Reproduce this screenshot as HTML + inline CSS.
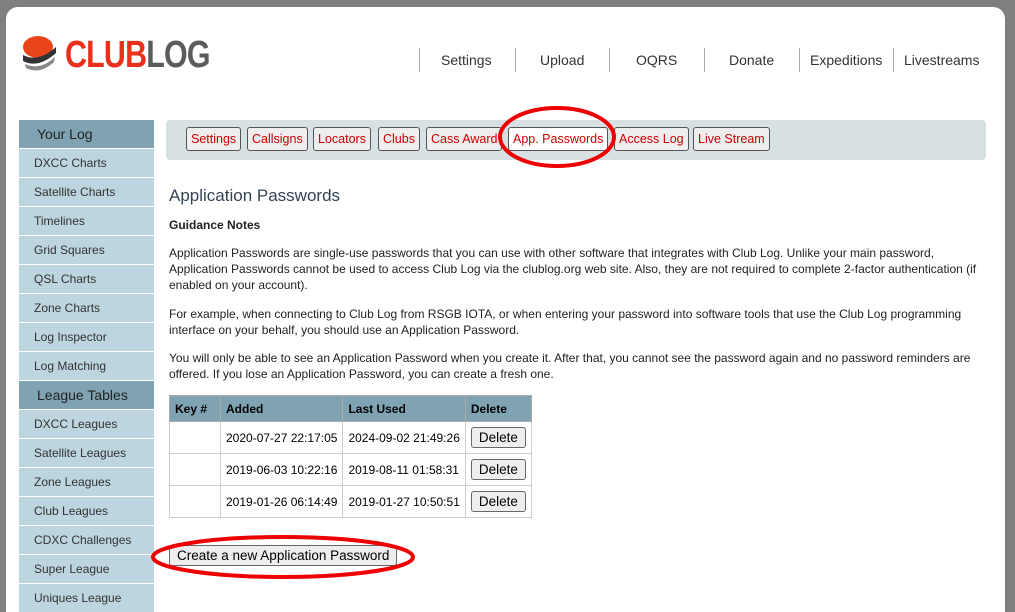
<!DOCTYPE html><html><head><style>
html,body{margin:0;width:1015px;height:612px;overflow:hidden}
body{background:#7f7f7f;font-family:"Liberation Sans",Arial,sans-serif;position:relative}
.page{position:absolute;left:6px;top:7px;width:999px;height:605px;background:#fff;border-radius:12px 12px 0 0}
.a{position:absolute}
.nav span{position:absolute;top:52px;font-size:14px;color:#333}
.sep{position:absolute;top:48px;width:1px;height:24px;background:#aaa}
.side div{position:absolute;left:19px;width:135px;height:28px;background:#bcd5df;font-size:12px;color:#333;line-height:28px;text-indent:15px}
.side div.h{background:#7fa3b2;font-size:14px;text-indent:18px;color:#222}
.tab{position:absolute;top:127px;height:22px;border:1px solid #555;border-radius:3px;background:#eee;color:#c00;font-size:12.5px;line-height:22px;padding:0 4px}
.t{position:absolute;left:169px;font-size:12px;color:#222;line-height:16px;width:810px}
table{position:absolute;left:169px;top:395px;border-collapse:collapse;font-size:12px}
td,th{border:1px solid #ccc;padding:0 5px;height:31px;text-align:left;white-space:nowrap}
th{background:#7fa3b2;height:25px;border-color:#aaa}
button{font:13.5px "Liberation Sans",Arial,sans-serif;background:#eee;border:1px solid #666;border-radius:3px;padding:2px 7px}
</style></head><body>
<div class="page"></div>
<svg class="a" style="left:20px;top:33px" width="40" height="40"><ellipse cx="18" cy="14" rx="15" ry="11" fill="#e8461a"/><path d="M3 22 Q18 30 36 14 L36 20 Q18 36 3 28Z" fill="#333"/><path d="M5 31 Q20 38 35 24 L34 29 Q20 42 6 35Z" fill="#888"/></svg>
<div class="a" style="left:65px;top:34px;font-size:38px;font-weight:bold;letter-spacing:-1px;transform:scaleX(0.8);transform-origin:left"><span style="color:#e8301a">CLUB</span><span style="color:#5b5b5b">LOG</span></div>
<div class="nav"><div class="sep" style="left:419px"></div><span style="left:441px">Settings</span><div class="sep" style="left:515px"></div><span style="left:540px">Upload</span><div class="sep" style="left:609px"></div><span style="left:636px">OQRS</span><div class="sep" style="left:704px"></div><span style="left:729px">Donate</span><div class="sep" style="left:799px"></div><span style="left:810px">Expeditions</span><div class="sep" style="left:893px"></div><span style="left:904px">Livestreams</span></div>
<div class="side">
<div class="h" style="top:120px">Your Log</div>
<div style="top:149px">DXCC Charts</div><div style="top:178px">Satellite Charts</div><div style="top:207px">Timelines</div><div style="top:236px">Grid Squares</div><div style="top:265px">QSL Charts</div><div style="top:294px">Zone Charts</div><div style="top:323px">Log Inspector</div><div style="top:352px">Log Matching</div>
<div class="h" style="top:381px">League Tables</div>
<div style="top:410px">DXCC Leagues</div><div style="top:439px">Satellite Leagues</div><div style="top:468px">Zone Leagues</div><div style="top:497px">Club Leagues</div><div style="top:526px">CDXC Challenges</div><div style="top:555px">Super League</div><div style="top:584px;height:28px">Uniques League</div>
</div>
<div class="a" style="left:166px;top:120px;width:820px;height:40px;background:#d7e0e3;border-radius:4px"></div>
<div class="tab" style="left:186px">Settings</div><div class="tab" style="left:247px">Callsigns</div><div class="tab" style="left:313px">Locators</div><div class="tab" style="left:378px">Clubs</div><div class="tab" style="left:426px">Cass Award</div><div class="tab" style="left:508px;background:#fff">App. Passwords</div><div class="tab" style="left:614px">Access Log</div><div class="tab" style="left:693px">Live Stream</div>
<div class="t" style="top:188px;font-size:17px;color:#345">Application Passwords</div>
<div class="t" style="top:217px;font-weight:bold">Guidance Notes</div>
<div class="t" style="top:245px">Application Passwords are single-use passwords that you can use with other software that integrates with Club Log. Unlike your main password, Application Passwords cannot be used to access Club Log via the clublog.org web site. Also, they are not required to complete 2-factor authentication (if enabled on your account).</div>
<div class="t" style="top:306px">For example, when connecting to Club Log from RSGB IOTA, or when entering your password into software tools that use the Club Log programming interface on your behalf, you should use an Application Password.</div>
<div class="t" style="top:350px">You will only be able to see an Application Password when you create it. After that, you cannot see the password again and no password reminders are offered. If you lose an Application Password, you can create a fresh one.</div>
<table><tr><th style="width:40px">Key #</th><th style="width:111px">Added</th><th style="width:111px">Last Used</th><th style="width:55px">Delete</th></tr>
<tr><td></td><td>2020-07-27 22:17:05</td><td>2024-09-02 21:49:26</td><td><button>Delete</button></td></tr>
<tr><td></td><td>2019-06-03 10:22:16</td><td>2019-08-11 01:58:31</td><td><button>Delete</button></td></tr>
<tr><td></td><td>2019-01-26 06:14:49</td><td>2019-01-27 10:50:51</td><td><button>Delete</button></td></tr></table>
<button class="a" style="left:169px;top:545px">Create a new Application Password</button>
<svg class="a" style="left:0;top:0" width="1015" height="612"><ellipse cx="557" cy="137" rx="57" ry="29" fill="none" stroke="#e00" stroke-width="4"/><ellipse cx="283" cy="557" rx="130" ry="20" fill="none" stroke="#e00" stroke-width="4"/></svg>
</body></html>
